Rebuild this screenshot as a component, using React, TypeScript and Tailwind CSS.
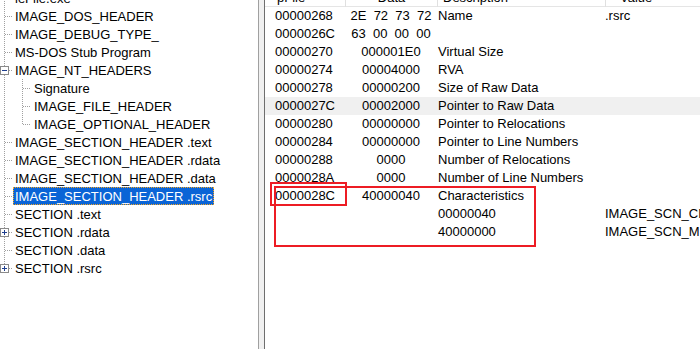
const FONT = { fontFamily: '"Liberation Sans", Arial, sans-serif' };

type TreeRow = {
  label: string;
  level: 0 | 1;
  box?: "plus" | "minus";
  last?: boolean;
  selected?: boolean;
};

const tree: TreeRow[] = [
  { label: "ieFile.exe", level: 0 },
  { label: "IMAGE_DOS_HEADER", level: 0 },
  { label: "IMAGE_DEBUG_TYPE_", level: 0 },
  { label: "MS-DOS Stub Program", level: 0 },
  { label: "IMAGE_NT_HEADERS", level: 0, box: "minus" },
  { label: "Signature", level: 1 },
  { label: "IMAGE_FILE_HEADER", level: 1 },
  { label: "IMAGE_OPTIONAL_HEADER", level: 1, last: true },
  { label: "IMAGE_SECTION_HEADER .text", level: 0 },
  { label: "IMAGE_SECTION_HEADER .rdata", level: 0 },
  { label: "IMAGE_SECTION_HEADER .data", level: 0 },
  { label: "IMAGE_SECTION_HEADER .rsrc", level: 0, selected: true },
  { label: "SECTION .text", level: 0 },
  { label: "SECTION .rdata", level: 0, box: "plus" },
  { label: "SECTION .data", level: 0 },
  { label: "SECTION .rsrc", level: 0, box: "plus", last: true },
];

const rows = [
  { off: "00000268", data: "2E  72  73  72", desc: "Name", value: ".rsrc" },
  { off: "0000026C", data: "63  00  00  00", desc: "", value: "" },
  { off: "00000270", data: "000001E0", desc: "Virtual Size", value: "" },
  { off: "00000274", data: "00004000", desc: "RVA", value: "" },
  { off: "00000278", data: "00000200", desc: "Size of Raw Data", value: "" },
  { off: "0000027C", data: "00002000", desc: "Pointer to Raw Data", value: "", hl: true },
  { off: "00000280", data: "00000000", desc: "Pointer to Relocations", value: "" },
  { off: "00000284", data: "00000000", desc: "Pointer to Line Numbers", value: "" },
  { off: "00000288", data: "0000", desc: "Number of Relocations", value: "" },
  { off: "0000028A", data: "0000", desc: "Number of Line Numbers", value: "" },
  { off: "0000028C", data: "40000040", desc: "Characteristics", value: "" },
  { off: "", data: "", desc: "00000040", value: "IMAGE_SCN_CNT_INITIALIZED_DATA" },
  { off: "", data: "", desc: "40000000", value: "IMAGE_SCN_MEM_READ" },
];

function Gutter({ row }: { row: TreeRow }) {
  const w = row.level === 0 ? 13 : 32;
  const dot = { stroke: "#a0a0a0", strokeWidth: 1, strokeDasharray: "1 1" };
  return (
    <svg width={w} height={18} className="shrink-0">
      <line x1={4.5} y1={0} x2={4.5} y2={row.level === 0 && row.last ? 9 : 18} {...dot} />
      {row.level === 0 && <line x1={5} y1={9.5} x2={13} y2={9.5} {...dot} />}
      {row.level === 1 && (
        <>
          <line x1={22.5} y1={0} x2={22.5} y2={row.last ? 9 : 18} {...dot} />
          <line x1={23} y1={9.5} x2={31} y2={9.5} {...dot} />
        </>
      )}
      {row.label === "IMAGE_NT_HEADERS" && (
        <line x1={22.5} y1={13} x2={22.5} y2={18} {...dot} />
      )}
      {row.box && (
        <g>
          <rect x={0.5} y={5.5} width={8} height={8} fill="#fff" stroke="#8a8a8a" />
          <line x1={2} y1={9.5} x2={7} y2={9.5} stroke="#1f3f8f" />
          {row.box === "plus" && <line x1={4.5} y1={7} x2={4.5} y2={12} stroke="#1f3f8f" />}
        </g>
      )}
    </svg>
  );
}

export default function App() {
  return (
    <div
      className="relative flex h-[349px] w-[700px] overflow-hidden bg-white text-[13px] text-black"
      style={FONT}
    >
      {/* tree pane */}
      <div className="w-[259px] shrink-0 overflow-hidden border-r border-[#a0a0a0]">
        <div className="-mt-[11px]">
          {tree.map((r) => (
            <div key={r.label} className="flex h-[18px] items-center whitespace-nowrap">
              <Gutter row={r} />
              <span
                className={
                  r.selected
                    ? "flex h-[18px] items-center border border-dotted border-[#f5a623] bg-[#0a64d6] px-[1px] leading-none text-white"
                    : "px-[2px] leading-none"
                }
              >
                {r.label}
              </span>
            </div>
          ))}
        </div>
      </div>

      {/* splitter */}
      <div className="w-[5px] shrink-0 bg-[#f0f0f0]" />

      {/* list pane */}
      <div className="flex-1 overflow-hidden border-l border-[#6e6e6e]">
        <div className="-mt-[11px] flex h-[18px] items-center whitespace-nowrap border-b border-[#e5e5e5]">
          <div className="w-[80px] shrink-0 pl-[12px]">pFile</div>
          <div className="w-[92px] shrink-0 border-l border-[#e0e0e0] text-center">Data</div>
          <div className="w-[168px] shrink-0 border-l border-[#e0e0e0] pl-[5px]">Description</div>
          <div className="flex-1 border-l border-[#e0e0e0] pl-[14px]">Value</div>
        </div>
        {rows.map((r, i) => (
          <div
            key={i}
            className={`flex h-[18px] items-center whitespace-nowrap ${r.hl ? "bg-[#f0f0f0]" : ""}`}
          >
            <div className="w-[80px] shrink-0 pl-[10px]">{r.off}</div>
            <div className="w-[92px] shrink-0 whitespace-pre text-center">{r.data}</div>
            <div className="w-[168px] shrink-0 pl-[1px]">{r.desc}</div>
            <div className="flex-1">{r.value}</div>
          </div>
        ))}
      </div>

      {/* red annotation boxes */}
      <div className="pointer-events-none absolute left-[270px] top-[182px] h-[24px] w-[77px] border-2 border-[#ed1c24]" />
      <div className="pointer-events-none absolute left-[274px] top-[186px] h-[61px] w-[262px] border-2 border-[#ed1c24]" />
    </div>
  );
}
